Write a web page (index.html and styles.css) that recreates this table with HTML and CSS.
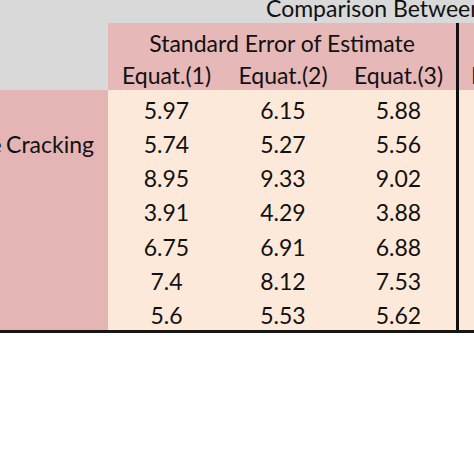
FILE: index.html
```html
<!DOCTYPE html>
<html>
<head>
<meta charset="utf-8">
<link rel="stylesheet" href="styles.css">
</head>
<body>
<div class="sheet">
  <div class="grid">
    <div class="corner"></div>
    <div class="title"><span>Comparison Between Models</span></div>

    <div class="group">Standard Error of Estimate</div>
    <div class="group2 sep"></div>

    <div class="hd c2">Equat.(1)</div>
    <div class="hd c3">Equat.(2)</div>
    <div class="hd c4">Equat.(3)</div>
    <div class="hd c5 sep">Equat.(1)</div>
    <div class="hd c6">Equat.(2)</div>

    <div class="label"></div>
    <div class="val">5.97</div><div class="val">6.15</div><div class="val">5.88</div><div class="val sep"></div><div class="val"></div>

    <div class="label"><span>Fatigue Cracking</span></div>
    <div class="val">5.74</div><div class="val">5.27</div><div class="val">5.56</div><div class="val sep"></div><div class="val"></div>

    <div class="label"></div>
    <div class="val">8.95</div><div class="val">9.33</div><div class="val">9.02</div><div class="val sep"></div><div class="val"></div>

    <div class="label"></div>
    <div class="val">3.91</div><div class="val">4.29</div><div class="val">3.88</div><div class="val sep"></div><div class="val"></div>

    <div class="label"></div>
    <div class="val">6.75</div><div class="val">6.91</div><div class="val">6.88</div><div class="val sep"></div><div class="val"></div>

    <div class="label"></div>
    <div class="val">7.4</div><div class="val">8.12</div><div class="val">7.53</div><div class="val sep"></div><div class="val"></div>

    <div class="label"></div>
    <div class="val">5.6</div><div class="val">5.53</div><div class="val">5.62</div><div class="val sep"></div><div class="val"></div>
  </div>
</div>
</body>
</html>
```
FILE: styles.css
```css
html, body {
  margin: 0;
  padding: 0;
  background: #ffffff;
}

.sheet {
  width: 474px;
  height: 474px;
  overflow: hidden;
  font-family: Lato, "Liberation Sans", sans-serif;
  font-size: 23px;
  color: #111111;
}

.grid {
  display: grid;
  grid-template-columns: 108px 117px 116px 115px 116px 116px;
  grid-template-rows: 23px 35px 32px repeat(7, 34.286px);
  width: 588px;
  border-bottom: 3px solid #161616;
}

.grid > div {
  box-sizing: border-box;
  display: flex;
  align-items: center;
  justify-content: center;
  white-space: nowrap;
  overflow: hidden;
}

.corner {
  grid-column: 1;
  grid-row: 1 / 4;
  background: #d9d9d9;
}

.title {
  grid-column: 2 / 7;
  grid-row: 1;
  background: #d9d9d9;
  justify-content: flex-start !important;
  padding-left: 158px;
  padding-bottom: 7px;
}

.group {
  grid-column: 2 / 5;
  grid-row: 2;
  background: #e6b8b7;
  padding-top: 5px;
}

.group2 {
  grid-column: 5 / 7;
  grid-row: 2;
  background: #e6b8b7;
}

.hd {
  grid-row: 3;
  background: #e6b8b7;
  padding-top: 2px;
}

.sep {
  border-left: 3px solid #111111;
}

.label {
  grid-column: 1;
  background: #e5b5b6;
  justify-content: flex-end !important;
  padding-right: 14px;
  padding-top: 5px;
  word-spacing: -1.5px;
}

.val {
  background: #fde9d9;
  padding-top: 5px;
}
```
